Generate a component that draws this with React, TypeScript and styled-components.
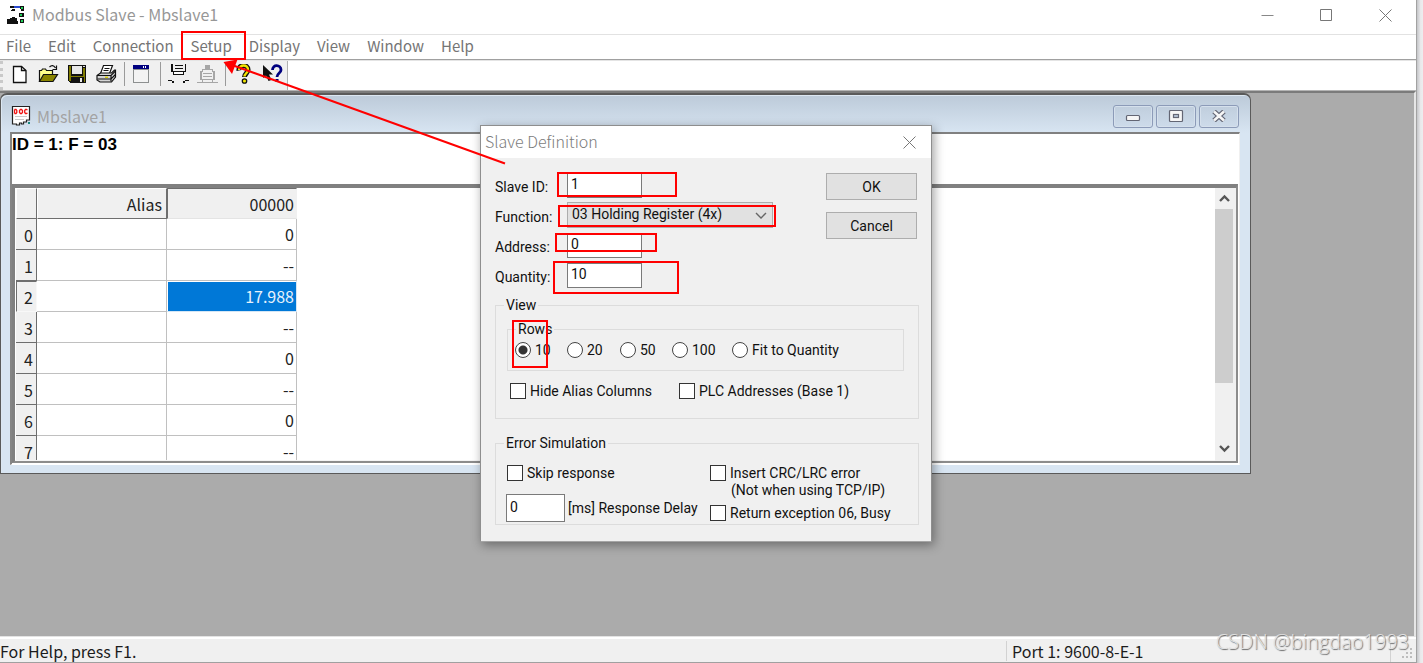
import React from "react";
import styled, { createGlobalStyle, css } from "styled-components";

const uiFont = `"Noto Sans CJK SC", "Noto Sans", sans-serif`;
const dialogFont = `Roboto, "Liberation Sans", sans-serif`;

const GlobalStyle = createGlobalStyle`
  *, *::before, *::after { box-sizing: border-box; }
  body { margin: 0; background: #f3f3f4; overflow: hidden; }
  button, input, select { font: inherit; color: inherit; margin: 0; }
`;

/* ---------- application frame ---------- */

const Desktop = styled.div`
  position: relative;
  display: grid;
  grid-template-columns: minmax(0, 1fr) 7px;
  min-height: 100vh;
  font: 16px/20px ${uiFont};
  color: #222;
`;

const Backdrop = styled.div`
  background: linear-gradient(90deg, #c4c5c8, #e9e9eb 60%, #ededef);
  border-left: 1px solid #a2a2a2;
`;

const AppWindow = styled.main`
  display: flex;
  flex-direction: column;
  background: #fff;
  border-bottom: 1px solid #a0a0a0;
`;

const TitleBar = styled.header`
  display: flex;
  align-items: center;
  height: 35px;
  padding: 0 20px 4px 6px;
  gap: 6px;
  border-bottom: 1px solid #e2e2e2;
`;

const AppTitle = styled.h1`
  margin: 0;
  padding-bottom: 3px;
  flex: 1;
  font-size: 16px;
  font-weight: 400;
  color: #979797;
`;

const CaptionButtons = styled.div`
  display: flex;
  gap: 38px;
`;

const PlainButton = styled.button`
  display: grid;
  place-items: center;
  width: 21px;
  height: 21px;
  padding: 0;
  border: 0;
  background: none;
  line-height: 0;
`;

const MenuBar = styled.nav`
  display: flex;
  gap: 17px;
  height: 25px;
  padding: 0 6px;
  border-bottom: 1px solid #a0a0a0;
  font-size: 15px;
  line-height: 22px;
`;

const MenuLink = styled.a`
  color: #757575;
  text-decoration: none;
`;

const ToolBar = styled.div`
  display: flex;
  height: 31px;
  border-top: 1px solid #e4e4e4;
  border-bottom: 1px solid #b4b4b4;
`;

const ToolGroup = styled.div`
  display: flex;
  align-items: center;
  gap: 8px;
  padding: 0 4px 3px 6px;
  background: #f0f0f0;
  border-left: 3px dotted #c9c9c9;
  border-right: 1px solid #b0b0b0;
`;

const ToolSeparator = styled.span`
  width: 1px;
  height: 24px;
  margin: 0 -1px;
  background: #9a9a9a;
`;

const Workspace = styled.section`
  position: relative;
  flex: 1;
  min-height: 400px;
  background: #ababab;
  border-top: 2px solid #7b7b7b;
  border-right: 2px solid #e6e6e6;
  border-bottom: 1px solid #e3e3e3;
`;

const StatusBar = styled.footer`
  display: flex;
  align-items: center;
  height: 25px;
  background: #f0f0f0;
  border-top: 2px solid #fff;
  color: #1c1c1c;
`;

const StatusText = styled.span`
  flex: 1;
`;

const PortText = styled.span`
  width: 384px;
  padding-left: 5px;
  border-left: 1px solid #d2d2d2;
`;

const Grip = styled.svg`
  align-self: flex-end;
  width: 26px;
  height: 20px;
`;

/* ---------- document window ---------- */

const ChildWindow = styled.article`
  position: absolute;
  top: 0;
  left: 0;
  width: calc(100% - 163px);
  height: 381px;
  display: flex;
  flex-direction: column;
  padding: 0 10px 8px 9px;
  border: 1px solid #5a5a5a;
  border-top-width: 2px;
  border-radius: 7px 7px 0 0;
  background: linear-gradient(#bccad9, #d8e5f2 38px);
  box-shadow: inset 1px 1px 0 #dce7f2;
`;

const ChildTitleBar = styled.header`
  display: flex;
  align-items: center;
  gap: 6px;
  height: 37px;
  padding: 5px 1px 0;
`;

const ChildTitle = styled.h2`
  flex: 1;
  margin: 0;
  font-size: 16px;
  font-weight: 400;
  color: #a3a3a3;
`;

const ChildCaption = styled.div`
  display: flex;
  gap: 3px;
`;

const GlassButton = styled.button`
  display: grid;
  place-items: center;
  width: 40px;
  height: 23px;
  padding: 0;
  border: 1px solid #8c9bb8;
  border-radius: 3px;
  background: linear-gradient(#c0cedd, #cddbea);
  box-shadow: inset 0 0 0 1px #d5e0ec;
`;

const ChildBody = styled.div`
  flex: 1;
  min-height: 0;
  display: flex;
  flex-direction: column;
  padding: 0 1px 1px 0;
  background: #fff;
  border: 1px solid #fff;
  border-top: 2px solid #808080;
  border-left: 2px solid #858585;
  border-right-color: #f0f0f0;
`;

const Summary = styled.p`
  margin: 0;
  height: 50px;
  padding: 2px 0;
  font: bold 17px/18px "Liberation Sans", Arial, sans-serif;
  color: #000;
`;

const GridPane = styled.div`
  flex: 1;
  min-height: 0;
  display: flex;
  border: 2px solid #8c8c8c;
  border-top: 4px solid #808080;
  border-left: 3px solid #808080;
  overflow: hidden;
`;

const GridViewport = styled.div`
  flex: 1;
  overflow: hidden;
  padding-left: 1px;
  border-bottom: 1px solid #f4f4f4;
`;

const RegisterTable = styled.table`
  border-collapse: separate;
  border-spacing: 0;
  table-layout: fixed;
  width: 281px;
`;

const cell = css`
  height: 31px;
  padding: 0 2px 0 0;
  text-align: right;
  font-weight: 400;
  color: #222;
`;

const HeadCell = styled.th<{ $selected?: boolean }>`
  ${cell}
  padding-right: ${(p) => (p.$selected ? "2px" : "4px")};
  background: #f0f0f0;
  border-bottom: 1px solid ${(p) => (p.$selected ? "#e4e4e4" : "#6e6e6e")};
  border-right: 1px solid ${(p) => (p.$selected ? "#f0f0f0" : "#6e6e6e")};
  border-top: 1px solid ${(p) => (p.$selected ? "#6e6e6e" : "#fff")};
  border-left: 1px solid ${(p) => (p.$selected ? "#6e6e6e" : "#fff")};
`;

const RowCell = styled.th<{ $selected?: boolean }>`
  ${cell}
  padding: 1px 3px 0 0;
  background: #f0f0f0;
  border-bottom: 1px solid #6e6e6e;
  border-right: 1px solid #6e6e6e;
  ${(p) =>
    p.$selected &&
    css`
      border-top: 1px solid #6e6e6e;
      border-left: 1px solid #6e6e6e;
      border-bottom-color: #f8f8f8;
      border-right-color: #f8f8f8;
    `}
`;

const DataCell = styled.td<{ $selected?: boolean }>`
  ${cell}
  border-right: 1px solid #c0c0c0;
  border-bottom: 1px solid #c0c0c0;
  ${(p) =>
    p.$selected &&
    css`
      color: #e8f2fc;
      background: #0078d7;
      border-color: #d4e6f5;
      box-shadow: inset 1px 1px 0 #fff;
    `}
`;

const ScrollBar = styled.div`
  display: flex;
  flex-direction: column;
  width: 21px;
  padding: 0 3px 2px 0;
  background: #f0f0f0;
`;

const ScrollThumb = styled.div`
  flex: 0 0 174px;
  background: #cdcdcd;
`;

const ScrollTrack = styled.div`
  flex: 1;
`;

const ArrowButton = styled(PlainButton)`
  width: 18px;
`;

/* ---------- slave definition dialog ---------- */

const Dialog = styled.section`
  position: absolute;
  top: 125px;
  left: 480px;
  width: 452px;
  background: #f0f0f0;
  border: 1px solid #8e8e8e;
  border-bottom-color: #a5a5a5;
  box-shadow: 2px 3px 10px rgba(0, 0, 0, 0.38);
  font: 14px/16px ${dialogFont};
  color: #111;
`;

const DialogTitleBar = styled.header`
  display: flex;
  align-items: center;
  justify-content: space-between;
  height: 32px;
  padding: 0 11px 0 4px;
  background: #fff;
`;

const DialogTitle = styled.h2`
  margin: 0;
  padding-bottom: 3px;
  font: 300 16px/20px ${uiFont};
  color: #7c7c7c;
`;

const DialogForm = styled.form`
  display: flex;
  flex-direction: column;
  padding: 12px 12px 16px 14px;
`;

const TopRow = styled.div`
  display: flex;
  justify-content: space-between;
  padding-right: 2px;
  margin-bottom: 7px;
`;

const FieldGrid = styled.div`
  display: grid;
  grid-template-columns: 72px auto;
  grid-auto-rows: 30px;
  align-items: center;
  justify-items: start;
`;

const FieldLabel = styled.label`
  padding-top: 4px;
`;

const TextBox = styled.input<{ $wide?: boolean }>`
  width: ${(p) => (p.$wide ? "59px" : "75px")};
  height: ${(p) => (p.$wide ? "28px" : "25px")};
  padding: 0 3px 2px;
  border: 1px solid #7a7a7a;
  border-radius: 0;
  background: #fff;
  outline: 0;
`;

const SelectWrap = styled.div`
  position: relative;
  line-height: 0;
`;

const SelectBox = styled.select`
  appearance: none;
  width: 206px;
  height: 26px;
  padding: 0 24px 2px 4px;
  border: 1px solid #adadad;
  border-radius: 0;
  background: #e1e1e1;
  line-height: 16px;
`;

const SelectArrow = styled.svg`
  position: absolute;
  top: 10px;
  right: 6px;
  pointer-events: none;
`;

const DialogButtons = styled.div`
  display: flex;
  flex-direction: column;
  gap: 12px;
  padding-top: 3px;
`;

const PushButton = styled.button`
  width: 91px;
  height: 27px;
  padding: 0;
  border: 1px solid #adadad;
  background: #e1e1e1;
`;

const GroupBox = styled.fieldset`
  margin: 0;
  min-width: 0;
  border: 1px solid #dcdcdc;
  padding: 8px 14px 19px 11px;
`;

const RowsBox = styled(GroupBox)`
  padding: 5px 6px 12px 7px;
  margin-bottom: 12px;
`;

const ErrorBox = styled(GroupBox)`
  display: grid;
  grid-template-columns: 203px 1fr;
  margin-top: 16px;
  padding: 14px 10px 2px 11px;
`;

const Legend = styled.legend<{ $outer?: boolean }>`
  padding: 0 2px;
  margin-left: ${(p) => (p.$outer ? "-3px" : "1px")};
`;

const RadioRow = styled.div`
  display: grid;
  grid-template-columns: 52px 53px 52px 60px auto;
`;

const Choice = styled.label`
  display: flex;
  align-items: center;
  gap: 4px;
  height: 16px;
  white-space: nowrap;
`;

const Radio = styled.input`
  appearance: none;
  width: 16px;
  height: 16px;
  border: 1px solid #444;
  border-radius: 50%;
  background: #fff;
  &:checked {
    background: radial-gradient(circle, #333 4px, #fff 5px);
  }
`;

const CheckBox = styled.input`
  appearance: none;
  width: 16px;
  height: 16px;
  border: 1px solid #333;
  background: #fff;
`;

const CheckRow = styled.div`
  display: grid;
  grid-template-columns: 169px auto;
  padding-left: 3px;
`;

const ErrorColumn = styled.div`
  display: flex;
  flex-direction: column;
`;

const DelayRow = styled.label`
  display: flex;
  align-items: center;
  gap: 3px;
  margin: 13px 0 0 -1px;
  white-space: nowrap;
`;

const ChoiceNote = styled.span`
  padding: 1px 0 0 21px;
  margin-bottom: 7px;
`;

/* ---------- annotations ---------- */

const Marker = styled.div<{ $x: number; $y: number; $w: number; $h: number }>`
  position: absolute;
  left: ${(p) => p.$x}px;
  top: ${(p) => p.$y}px;
  width: ${(p) => p.$w}px;
  height: ${(p) => p.$h}px;
  border: 2px solid #f00;
  pointer-events: none;
`;

const Pointer = styled.svg`
  position: absolute;
  left: 0;
  top: 0;
  pointer-events: none;
`;

const Watermark = styled.span`
  position: absolute;
  right: 14px;
  bottom: 7px;
  font: 300 20px/28px "Open Sans", sans-serif;
  color: #e2e2e2;
  text-shadow: 1px 1px 1px #666;
`;

/* ---------- icons ---------- */

const AppIcon = () => (
  <svg width="20" height="20" viewBox="0 0 20 20" shapeRendering="crispEdges">
    <path d="M4 1h4v2H4zM6 4h3v2H5V5h1z" fill="#111" />
    <path d="M8 1h6v2H8z" fill="#2b4bd0" />
    <path d="M14 1h4v5h-3V4h-1zM13 8h5v4h-5zM14 14h4v4h-4z" fill="#111" />
    <path d="M15 2h2v2h-2zM14 9h2v2h-2zM15 15h2v2h-2z" fill="#22d05a" />
    <path d="M1 16v-2h3v-1h2v-1h3v1h2v3h1v1H1zM1 17h11v2H1z" fill="#111" />
  </svg>
);

const NewIcon = () => (
  <svg width="21" height="20" viewBox="0 0 21 20">
    <path d="M4.500 2.500h8l4.500 4v12H4.500z" fill="#fff" stroke="#111" strokeWidth="1.300" />
    <path d="M12.500 2.500v4H17" fill="none" stroke="#111" strokeWidth="1.300" />
  </svg>
);

const OpenIcon = () => (
  <svg width="21" height="20" viewBox="0 0 21 20">
    <path d="M1.500 17.500v-11h2l1-1.500h3l1 1.500h6v4" fill="#ffff8c" stroke="#111" strokeWidth="1.200" />
    <path d="M1.500 17.500l4-7h14l-4.500 7z" fill="#8a8400" stroke="#111" strokeWidth="1.200" />
    <path d="M11.500 3c2-2 4-2 6 1M18.500 1.500v4h-4" fill="none" stroke="#111" strokeWidth="1.200" />
  </svg>
);

const SaveIcon = () => (
  <svg width="21" height="20" viewBox="0 0 21 20" shapeRendering="crispEdges">
    <path d="M1 1h18v18H3l-2-2z" fill="#111" />
    <path d="M2 2h2v10h12V4h2v14h-1v-5H4v4H2z" fill="#817c00" />
    <path d="M5 2h10v8H5zM13 14h2v4h-2z" fill="#e8e8e8" />
    <path d="M16 2h2v1h-2z" fill="#ddd" />
  </svg>
);

const PrintIcon = () => (
  <svg width="21" height="20" viewBox="0 0 21 20">
    <path d="M4.500 9.500l3-8h9l-3 8z" fill="#fff" stroke="#111" strokeWidth="1.200" />
    <path d="M8.500 4.500h5M7.500 6.500h5" stroke="#111" />
    <path d="M1 11.500l3.500-2.500h11l3-3h1v7l-4 5H4l-3-2z" fill="#d4d4d4" stroke="#111" strokeWidth="1.200" />
    <path d="M1 11.500h14l4.500-4.500M1.500 15h13.500l4.500-4.500M15 11.500v6" fill="none" stroke="#111" strokeWidth="1.200" />
    <path d="M9 13.300h3" stroke="#d8d000" strokeWidth="1.400" />
  </svg>
);

const WindowIcon = () => (
  <svg width="21" height="20" viewBox="0 0 21 20" shapeRendering="crispEdges">
    <path d="M1 1h16v18H1z" fill="#8d9090" />
    <path d="M2 6h14v12H2z" fill="#f3f3f3" />
    <path d="M1 1h16v4H1z" fill="#00007f" />
    <path d="M11 2h1v2h-1zM13 2h1v2h-1z" fill="#fff" />
  </svg>
);

const ConnectIcon = () => (
  <svg width="21" height="20" viewBox="0 0 21 20" shapeRendering="crispEdges">
    <path d="M3 0h2v7h12V0h1v8H3z" fill="#111" />
    <path d="M5 0h12v7H5z" fill="#efefef" />
    <path d="M7 1h8v1H7zM7 4h8v1H7zM3 7h15v1H3zM5 8h1v3H5zM15 8h1v3h-1zM5 10h11v1H5z" fill="#111" />
    <path d="M6 8h9v2H6z" fill="#fff" />
    <path d="M0 16h4v1H0zM4 17h2v2H4zM17 16h4v1h-4zM15 17h2v2h-2z" fill="#111" />
  </svg>
);

const DisconnectIcon = () => (
  <svg width="21" height="20" viewBox="0 0 21 20" shapeRendering="crispEdges">
    <path d="M8 1h5v4H8zM5 5h11v1H5zM3 7h2v9H3zM16 7h2v9h-2zM5 6h1v2H5zM15 6h1v2h-1zM6 9h9v1H6zM6 12h9v1H6zM3 15h15v1H3zM5 16h1v2H5zM15 16h1v2h-1zM0 18h21v1H0z" fill="#a6a6a6" />
  </svg>
);

const HelpIcon = () => (
  <svg width="21" height="20" viewBox="0 0 21 20">
    <path d="M6 6.500C5 0 15.500 0 15 6c0 3-3.500 3.500-3.500 7" fill="none" stroke="#111" strokeWidth="5" />
    <path d="M6 6C6 0 15.500 0 15 6c0 3-3.500 3.500-3.500 6.500" fill="none" stroke="#f2e600" strokeWidth="2.400" />
    <circle cx="11.500" cy="17" r="2.200" fill="#f2e600" stroke="#111" strokeWidth="1.300" />
  </svg>
);

const ContextHelpIcon = () => (
  <svg width="21" height="20" viewBox="0 0 21 20">
    <path d="M1 1v13l3-2.500 2.500 5.500 3-1-2.500-5.500h4z" fill="#111" />
    <path d="M10.500 6c0-6 8.500-5.500 8.500 0 0 3-4 3-4 7" fill="none" stroke="#00007f" strokeWidth="2.800" />
    <path d="M13.500 15h3v3h-3z" fill="#00007f" />
  </svg>
);

const DocIcon = () => (
  <svg width="20" height="20" viewBox="0 0 20 20">
    <path d="M1.500.5h17v13.500h-3v2h-3v2h-2v-1h-2v2h-3v-1h-4z" fill="#fff" stroke="#222" strokeWidth="1.200" />
    <path d="M3.500 3.500v4M3.500 3.500h1.500l.8 1v2l-.8 1H3.500M8.500 4.500l1-1h1l1 1v2l-1 1h-1l-1-1zM16.500 4l-1-.5h-1l-.8 1v2l.8 1h1l1-.5" fill="none" stroke="#f01515" strokeWidth="1.300" />
    <path d="M4 10.500h12M4 13.500h9" stroke="#c9c9c9" />
    <path d="M17 16h2v2h-2z" fill="#17877e" />
  </svg>
);

const Minus = () => (
  <svg width="13" height="13" viewBox="0 0 13 13">
    <path d="M.5 6.500h12" stroke="#888" />
  </svg>
);
const Square = () => (
  <svg width="13" height="13" viewBox="0 0 13 13">
    <path d="M.5.5h11v11H.5z" fill="none" stroke="#777" />
  </svg>
);
const Cross = () => (
  <svg width="13" height="13" viewBox="0 0 13 13">
    <path d="M.5.5l12 12M12.500.5l-12 12" stroke="#777" />
  </svg>
);
const GlassMin = () => (
  <svg width="16" height="12" viewBox="0 0 16 12">
    <rect x="1.500" y="5.500" width="13" height="5" rx="1" fill="#f6f6f6" stroke="#636674" strokeWidth="1.200" />
  </svg>
);
const GlassMax = () => (
  <svg width="16" height="12" viewBox="0 0 16 12">
    <rect x="1.500" y=".5" width="13" height="11" rx="1" fill="#f6f6f6" stroke="#636674" strokeWidth="1.200" />
    <rect x="5.500" y="4.500" width="5" height="3" fill="#b9c8da" stroke="#636674" strokeWidth="1.200" />
  </svg>
);
const GlassClose = () => (
  <svg width="16" height="12" viewBox="0 0 16 12">
    <path d="M3 1.500l10 9M13 1.500l-10 9" stroke="#636674" strokeWidth="5" />
    <path d="M3 1.500l10 9M13 1.500l-10 9" stroke="#f6f6f6" strokeWidth="2.600" />
  </svg>
);
const Chevron = ({ up }: { up?: boolean }) => (
  <svg width="11" height="9" viewBox="0 0 11 9">
    <path d={up ? "M1 7l4.500-4.500L10 7" : "M1 2l4.500 4.500L10 2"} fill="none" stroke="#555" strokeWidth="2.400" />
  </svg>
);

const menus = ["File", "Edit", "Connection", "Setup", "Display", "View", "Window", "Help"];

const tools: Array<[string, React.FC] | null> = [
  ["New", NewIcon],
  ["Open", OpenIcon],
  ["Save", SaveIcon],
  ["Print", PrintIcon],
  null,
  ["Definition", WindowIcon],
  null,
  ["Connect", ConnectIcon],
  ["Disconnect", DisconnectIcon],
  null,
  ["About", HelpIcon],
  ["Context help", ContextHelpIcon],
];

const registers = ["0", "--", "17.988", "--", "0", "--", "0", "--"];
const rowOptions = ["10", "20", "50", "100", "Fit to Quantity"];

function DocumentWindow() {
  return (
    <ChildWindow>
      <ChildTitleBar>
        <DocIcon />
        <ChildTitle>Mbslave1</ChildTitle>
        <ChildCaption>
          <GlassButton aria-label="Minimize document"><GlassMin /></GlassButton>
          <GlassButton aria-label="Maximize document"><GlassMax /></GlassButton>
          <GlassButton aria-label="Close document"><GlassClose /></GlassButton>
        </ChildCaption>
      </ChildTitleBar>
      <ChildBody>
        <Summary>ID = 1: F = 03</Summary>
        <GridPane>
          <GridViewport>
            <RegisterTable>
              <colgroup>
                <col width="21" />
                <col width="130" />
                <col width="130" />
              </colgroup>
              <thead>
                <tr>
                  <HeadCell />
                  <HeadCell>Alias</HeadCell>
                  <HeadCell $selected>00000</HeadCell>
                </tr>
              </thead>
              <tbody>
                {registers.map((value, i) => (
                  <tr key={i}>
                    <RowCell $selected={i === 2}>{i}</RowCell>
                    <DataCell />
                    <DataCell $selected={i === 2}>{value}</DataCell>
                  </tr>
                ))}
              </tbody>
            </RegisterTable>
          </GridViewport>
          <ScrollBar>
            <ArrowButton aria-label="Scroll up"><Chevron up /></ArrowButton>
            <ScrollThumb />
            <ScrollTrack />
            <ArrowButton aria-label="Scroll down"><Chevron /></ArrowButton>
          </ScrollBar>
        </GridPane>
      </ChildBody>
    </ChildWindow>
  );
}

function SlaveDefinition() {
  return (
    <Dialog role="dialog" aria-labelledby="dialog-title">
      <DialogTitleBar>
        <DialogTitle id="dialog-title">Slave Definition</DialogTitle>
        <PlainButton aria-label="Close dialog"><Cross /></PlainButton>
      </DialogTitleBar>
      <DialogForm onSubmit={(e) => e.preventDefault()}>
        <TopRow>
          <FieldGrid>
            <FieldLabel htmlFor="slave-id">Slave ID:</FieldLabel>
            <TextBox id="slave-id" defaultValue="1" />
            <FieldLabel htmlFor="function">Function:</FieldLabel>
            <SelectWrap>
              <SelectBox id="function">
                <option>03 Holding Register (4x)</option>
              </SelectBox>
              <SelectArrow width="12" height="8" viewBox="0 0 12 8">
                <path d="M1 1l5 5 5-5" fill="none" stroke="#666" strokeWidth="1.400" />
              </SelectArrow>
            </SelectWrap>
            <FieldLabel htmlFor="address">Address:</FieldLabel>
            <TextBox id="address" defaultValue="0" />
            <FieldLabel htmlFor="quantity">Quantity:</FieldLabel>
            <TextBox id="quantity" defaultValue="10" />
          </FieldGrid>
          <DialogButtons>
            <PushButton type="submit">OK</PushButton>
            <PushButton type="button">Cancel</PushButton>
          </DialogButtons>
        </TopRow>
        <GroupBox>
          <Legend $outer>View</Legend>
          <RowsBox>
            <Legend>Rows</Legend>
            <RadioRow>
              {rowOptions.map((label, i) => (
                <Choice key={label}>
                  <Radio type="radio" name="rows" defaultChecked={i === 0} />
                  {label}
                </Choice>
              ))}
            </RadioRow>
          </RowsBox>
          <CheckRow>
            <Choice><CheckBox type="checkbox" />Hide Alias Columns</Choice>
            <Choice><CheckBox type="checkbox" />PLC Addresses (Base 1)</Choice>
          </CheckRow>
        </GroupBox>
        <ErrorBox>
          <Legend $outer>Error Simulation</Legend>
          <ErrorColumn>
            <Choice><CheckBox type="checkbox" />Skip response</Choice>
            <DelayRow><TextBox $wide defaultValue="0" />[ms] Response Delay</DelayRow>
          </ErrorColumn>
          <ErrorColumn>
            <Choice><CheckBox type="checkbox" />Insert CRC/LRC error</Choice>
            <ChoiceNote>(Not when using TCP/IP)</ChoiceNote>
            <Choice><CheckBox type="checkbox" />Return exception 06, Busy</Choice>
          </ErrorColumn>
        </ErrorBox>
      </DialogForm>
    </Dialog>
  );
}

export default function App() {
  return (
    <Desktop>
      <GlobalStyle />
      <AppWindow>
        <TitleBar>
          <AppIcon />
          <AppTitle>Modbus Slave - Mbslave1</AppTitle>
          <CaptionButtons>
            <PlainButton aria-label="Minimize"><Minus /></PlainButton>
            <PlainButton aria-label="Maximize"><Square /></PlainButton>
            <PlainButton aria-label="Close"><Cross /></PlainButton>
          </CaptionButtons>
        </TitleBar>
        <MenuBar>
          {menus.map((name) => (
            <MenuLink key={name} href="#">{name}</MenuLink>
          ))}
        </MenuBar>
        <ToolBar>
          <ToolGroup>
            {tools.map((tool, i) => {
              if (!tool) return <ToolSeparator key={i} />;
              const [label, Icon] = tool;
              return (
                <PlainButton key={i} aria-label={label}><Icon /></PlainButton>
              );
            })}
          </ToolGroup>
        </ToolBar>
        <Workspace>
          <DocumentWindow />
        </Workspace>
        <StatusBar>
          <StatusText>For Help, press F1.</StatusText>
          <PortText>Port 1: 9600-8-E-1</PortText>
          <Grip viewBox="0 0 26 20">
            <path d="M.5 0v20" stroke="#d2d2d2" />
            <path d="M20 6h2v2h-2zM20 10h2v2h-2zM20 14h2v2h-2zM16 10h2v2h-2zM16 14h2v2h-2zM12 14h2v2h-2z" fill="#bdbdbd" />
          </Grip>
        </StatusBar>
      </AppWindow>
      <Backdrop />
      <SlaveDefinition />
      <Marker $x={181} $y={31} $w={65} $h={29} />
      <Marker $x={557} $y={172} $w={120} $h={25} />
      <Marker $x={558} $y={205} $w={218} $h={22} />
      <Marker $x={555} $y={233} $w={102} $h={19} />
      <Marker $x={553} $y={261} $w={126} $h={33} />
      <Marker $x={512} $y={320} $w={36} $h={48} />
      <Pointer width="520" height="170" viewBox="0 0 520 170">
        <path d="M505 163.500L232 65" stroke="#f00" strokeWidth="2" />
        <path d="M223.500 62l14-2.500-5.500 14.500z" fill="#f00" />
      </Pointer>
      <Watermark>CSDN @bingdao1993</Watermark>
    </Desktop>
  );
}
